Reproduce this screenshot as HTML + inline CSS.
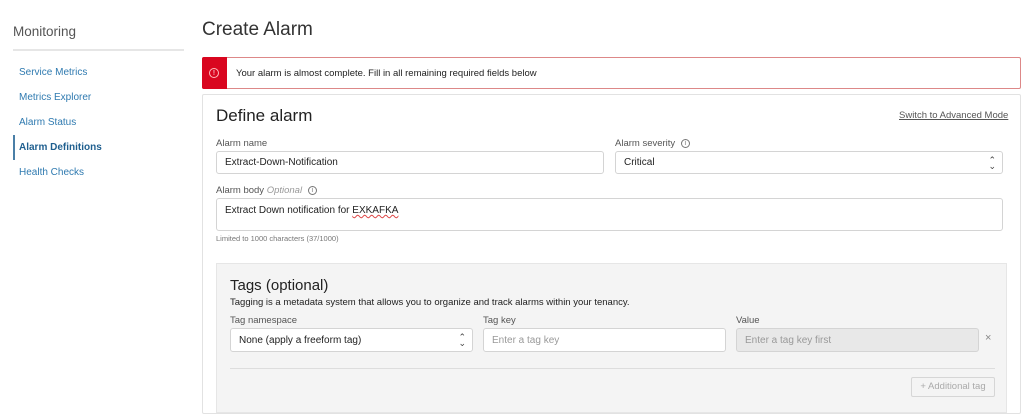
<!DOCTYPE html>
<html><head><style>
*{box-sizing:border-box;margin:0;padding:0}
body{width:1024px;height:404px;overflow:hidden;background:#fff;font-family:"Liberation Sans",sans-serif;position:relative;color:#222}
.a{position:absolute;white-space:nowrap}
.nav{font-size:10px;color:#2f7ab0}
.lbl{font-size:9.5px;color:#555}
.inp{position:absolute;border:1px solid #d4d4d4;border-radius:3px;background:#fff;font-size:10px;padding-left:8px;display:flex;align-items:center;color:#222}
.info{display:inline-block;width:9px;height:9px;border:1px solid #777;border-radius:50%;font-size:7px;text-align:center;line-height:8px;color:#777;font-style:normal;vertical-align:middle;margin-left:3px}
.arr{position:absolute;right:6px;top:50%;transform:translateY(-50%);font-size:9px;color:#444;line-height:6px;text-align:center}
</style></head><body>
<div class="a" style="left:13px;top:24px;font-size:13.5px;color:#555">Monitoring</div>
<div class="a" style="left:13px;top:49px;width:171px;height:2px;background:#e6e6e6"></div>
<div class="a nav" style="left:19px;top:67px">Service Metrics</div>
<div class="a nav" style="left:19px;top:92px">Metrics Explorer</div>
<div class="a nav" style="left:19px;top:117px">Alarm Status</div>
<div class="a" style="left:13px;top:135px;width:2px;height:25px;background:#4a7fa7"></div>
<div class="a nav" style="left:19px;top:142px;font-weight:bold;color:#1f5f8f">Alarm Definitions</div>
<div class="a nav" style="left:19px;top:167px">Health Checks</div>

<div class="a" style="left:202px;top:19px;font-size:19px;color:#333">Create Alarm</div>

<div class="a" style="left:202px;top:57px;width:819px;height:32px;border:1px solid #d88;border-radius:2px;background:#fff">
 <div class="a" style="left:-1px;top:-1px;width:25px;height:32px;background:#d9061f;border-radius:2px 0 0 2px"><span class="a" style="left:7px;top:11px;width:10px;height:10px;border:1px solid #fbb;border-radius:50%;font-size:7px;color:#fff;text-align:center;line-height:9px">!</span></div>
 <div class="a" style="left:33px;top:10px;font-size:9.5px;color:#222">Your alarm is almost complete. Fill in all remaining required fields below</div>
</div>

<div class="a" style="left:202px;top:94px;width:819px;height:320px;border:1px solid #e2e2e2;border-radius:2px"></div>
<div class="a" style="left:216px;top:106px;font-size:17px;color:#222">Define alarm</div>
<div class="a" style="left:899px;top:110px;font-size:9.5px;color:#555;text-decoration:underline">Switch to Advanced Mode</div>

<div class="a lbl" style="left:216px;top:138px">Alarm name</div>
<div class="inp" style="left:216px;top:151px;width:388px;height:23px">Extract-Down-Notification</div>
<div class="a lbl" style="left:615px;top:138px">Alarm severity <i class="info">i</i></div>
<div class="inp" style="left:615px;top:151px;width:388px;height:23px">Critical<div class="arr">⌃<br>⌄</div></div>

<div class="a lbl" style="left:216px;top:185px">Alarm body <i style="color:#999">Optional</i> <i class="info">i</i></div>
<div class="inp" style="left:216px;top:198px;width:787px;height:33px;align-items:flex-start;padding-top:6px">Extract Down notification for&nbsp;<span style="text-decoration:underline wavy #d44">EXKAFKA</span></div>
<div class="a" style="left:216px;top:234px;font-size:7.5px;color:#777">Limited to 1000 characters (37/1000)</div>

<div class="a" style="left:216px;top:263px;width:791px;height:150px;background:#f4f4f4;border:1px solid #e6e6e6"></div>
<div class="a" style="left:230px;top:277px;font-size:15px;color:#222">Tags (optional)</div>
<div class="a" style="left:230px;top:297px;font-size:9.5px;color:#222">Tagging is a metadata system that allows you to organize and track alarms within your tenancy.</div>
<div class="a lbl" style="left:230px;top:315px">Tag namespace</div>
<div class="inp" style="left:230px;top:328px;width:243px;height:24px">None (apply a freeform tag)<div class="arr">⌃<br>⌄</div></div>
<div class="a lbl" style="left:483px;top:315px">Tag key</div>
<div class="inp" style="left:483px;top:328px;width:243px;height:24px;color:#999">Enter a tag key</div>
<div class="a lbl" style="left:736px;top:315px">Value</div>
<div class="inp" style="left:736px;top:328px;width:243px;height:24px;background:#e8e8e8;color:#999">Enter a tag key first</div>
<div class="a" style="left:985px;top:332px;font-size:11px;color:#888">×</div>
<div class="a" style="left:230px;top:368px;width:765px;height:1px;background:#ddd"></div>
<div class="a" style="left:911px;top:377px;width:84px;height:20px;border:1px solid #d6d6d6;border-radius:2px;font-size:9.5px;color:#aaa;text-align:center;line-height:18px">+ Additional tag</div>
</body></html>
